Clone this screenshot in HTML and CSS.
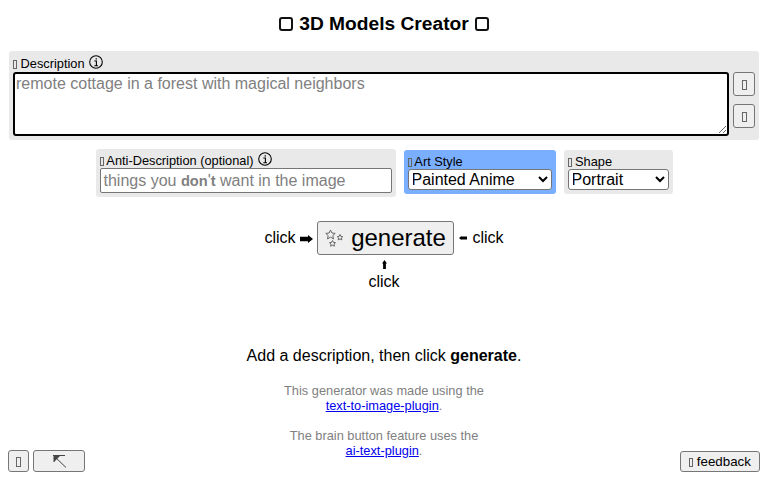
FILE: index.html
```html
<!DOCTYPE html>
<html lang="en">
<head>
<meta charset="utf-8">
<title>3D Models Creator</title>
<link rel="stylesheet" href="styles.css">
</head>
<body>
<h1 class="title"><span class="title-box title-box-l"></span> 3D Models Creator <span class="title-box title-box-r"></span></h1>
<section class="panel desc-panel">
  <div class="desc-main">
    <label class="label"><span class="tofu"></span> Description <svg class="info" width="14" height="14" viewBox="0 0 14 14" fill="none" stroke="#000"><circle cx="7" cy="7" r="6.3" stroke-width="1.1"/><path d="M5.3 6H7.4V10.5M5.3 10.7H9" stroke-width="1.1"/><path d="M6.6 3.2H7.9V4.5H6.6Z" fill="#000" stroke="none"/></svg></label>
    <textarea class="desc-input" placeholder="remote cottage in a forest with magical neighbors"></textarea>
  </div>
  <div class="desc-side">
    <button class="btn side-btn"><span class="tofu tofu-lg"></span></button>
    <button class="btn side-btn"><span class="tofu tofu-lg"></span></button>
  </div>
</section>
<section class="options">
  <div class="panel opt anti">
    <label class="label"><span class="tofu"></span> Anti-Description (optional) <svg class="info" width="14" height="14" viewBox="0 0 14 14" fill="none" stroke="#000"><circle cx="7" cy="7" r="6.3" stroke-width="1.1"/><path d="M5.3 6H7.4V10.5M5.3 10.7H9" stroke-width="1.1"/><path d="M6.6 3.2H7.9V4.5H6.6Z" fill="#000" stroke="none"/></svg></label>
    <div class="fake-input">things you <b>don</b>'<b>t</b> want in the image</div>
  </div>
  <div class="panel opt opt-sel art">
    <label class="label"><span class="tofu"></span> Art Style</label>
    <select class="sel sel-art"><option>Painted Anime</option></select>
  </div>
  <div class="panel opt opt-sel shape">
    <label class="label"><span class="tofu"></span> Shape</label>
    <select class="sel sel-shape"><option>Portrait</option></select>
  </div>
</section>
<section class="gen-row">
  <span class="click-side click-left">click
    <svg class="arrow-right" width="13" height="8" viewBox="0 0 13 8"><path d="M0 1.8H8V0L13 4 8 8V6.2H0Z" fill="#000"/></svg>
  </span>
  <button class="btn gen-btn">
    <svg class="stars" width="19" height="18" viewBox="0 0 19 18" fill="none" stroke="#666" stroke-width="1"><path d="M5.5 1 6.9 4 10.2 4.4 7.8 6.6 8.5 9.9 5.5 8.2 2.5 9.9 3.2 6.6 .8 4.4 4.1 4Z"/><path d="M15 5.5 15.8 7.3 17.8 7.6 16.4 8.9 16.8 10.9 15 9.9 13.2 10.9 13.6 8.9 12.2 7.6 14.2 7.3Z"/><path d="M7.5 11.5 8.4 13.4 10.5 13.7 9 15.1 9.4 17.2 7.5 16.2 5.6 17.2 6 15.1 4.5 13.7 6.6 13.4Z"/></svg>
    <span>generate</span>
  </button>
  <span class="click-side">
    <svg class="arrow-left" width="8" height="4" viewBox="0 0 8 4"><path d="M0 2 2.5 0V.6H8V3.4H2.5V4Z" fill="#000"/></svg>
    click
  </span>
</section>
<div class="up-click">
  <div class="up-arrow"><svg width="5" height="9" viewBox="0 0 5 9"><path d="M2.5 0 5 3.5H3.9V9H1.1V3.5H0Z" fill="#000"/></svg></div>
  <div>click</div>
</div>
<p class="hint">Add a description, then click <b>generate</b>.</p>
<p class="credit">This generator was made using the<br><a href="#">text-to-image-plugin</a>.</p>
<p class="credit credit-2">The brain button feature uses the<br><a href="#">ai-text-plugin</a>.</p>
<div class="corner-left">
  <button class="btn small-btn"><span class="tofu tofu-lg"></span></button>
  <button class="btn wide-btn">
    <svg width="14" height="14" viewBox="0 0 14 14" fill="none" stroke="#444" stroke-width="1"><path d="M0 1.5H12"/><path d="M1 2V8"/><path d="M2 3 13 13.5"/><path d="M1 2H7L1 8Z" fill="#444" stroke="none"/></svg>
  </button>
</div>
<button class="btn feedback"><span class="tofu"></span> feedback</button>
</body>
</html>
```
FILE: styles.css
```css
* { box-sizing: border-box; }
html, body { height: 100%; }
body {
  margin: 0;
  padding: 0 9px;
  font-family: "Liberation Sans", sans-serif;
  font-size: 16px;
  color: #000;
  background: #fff;
  overflow: hidden;
}
.title {
  margin: 0;
  padding-top: 13px;
  height: 51px;
  font-size: 19.2px;
  line-height: 22px;
  font-weight: 700;
  text-align: center;
}
.title-box {
  display: inline-block;
  width: 14px;
  height: 14px;
  border: 2px solid #111;
  border-radius: 3px;
  vertical-align: -1px;
}
.title-box-l { margin-right: 1px; }
.title-box-r { margin-left: 1px; }
.tofu {
  display: inline-block;
  width: 4px;
  height: 9px;
  border: 1px solid #666;
  vertical-align: -1px;
}
.tofu-lg { width: 5px; height: 10px; }
.panel {
  background: #e9e9e9;
  border-radius: 3px;
}
.label {
  display: block;
  font-size: 12.8px;
  line-height: 15px;
}
.info { vertical-align: -1px; margin-left: 1px; }
.desc-panel {
  display: flex;
  gap: 4px;
  height: 89px;
  padding: 4px;
}
.desc-main { flex: 1; min-width: 0; display: flex; flex-direction: column; }
.desc-main .label { height: 17px; }
.desc-input {
  display: block;
  width: 100%;
  height: 64px;
  padding: 1px;
  border: 2px solid #000;
  border-radius: 3px;
  font: 16px/18px "Liberation Sans", sans-serif;
  outline: none;
  background: #fff;
}
.desc-input::placeholder { color: #808080; }
.desc-side {
  display: flex;
  flex-direction: column;
  gap: 8px;
  padding-top: 17px;
}
.btn {
  background: #efefef;
  border: 1px solid #767676;
  border-radius: 3px;
  font-family: "Liberation Sans", sans-serif;
  color: #000;
  padding: 0;
}
.side-btn { width: 22px; height: 24px; }
.options {
  display: flex;
  justify-content: center;
  align-items: flex-start;
  gap: 8px;
  margin-top: 9px;
}
.opt { padding: 0 4px; height: 48px; }
.anti { width: 300px; }
.anti .label { height: 19px; padding-top: 3px; }
.opt-sel { height: 44px; margin-top: 1px; padding-top: 3px; }
.opt-sel .label { height: 15px; margin-top: 1px; }
.art { width: 152px; background: #7aaeff; }
.shape { width: 109px; }
.fake-input {
  height: 25px;
  border: 1px solid #767676;
  border-radius: 2px;
  background: #fff;
  color: #808080;
  font-size: 16px;
  line-height: 23px;
  padding-left: 3px;
  white-space: nowrap;
}
.fake-input b { font-size: 14.6px; }
.sel {
  display: block;
  width: 100%;
  height: 21px;
  font: 16px "Liberation Sans", sans-serif;
  text-indent: -1px;
  background: #fff;
  color: #000;
  border: 1px solid #767676;
  border-radius: 3px;
}
.gen-row {
  display: flex;
  justify-content: center;
  align-items: center;
  gap: 5px;
  margin-top: 24px;
  height: 34px;
}
.click-side { white-space: nowrap; }
.click-left { margin-right: -1px; }
.arrow-right { vertical-align: 0; }
.arrow-left { vertical-align: 3px; margin-right: 1px; }
.gen-btn {
  display: flex;
  align-items: center;
  justify-content: center;
  gap: 7px;
  width: 137px;
  height: 34px;
  font-size: 24px;
}
.stars { flex: none; }
.up-click { text-align: center; line-height: 18px; }
.up-arrow { height: 18px; line-height: 18px; padding-top: 1px; }
.up-arrow svg { display: block; margin: 4px auto 0; }
.hint { margin: 56px 0 0; text-align: center; line-height: 18px; }
.credit {
  margin: 18px 0 0;
  text-align: center;
  font-size: 12.8px;
  line-height: 15px;
  color: #808080;
}
.credit-2 { margin-top: 15px; }
.credit a { color: #0000ee; }
.corner-left {
  position: fixed;
  left: 8px;
  bottom: 8px;
  display: flex;
  gap: 4px;
}
.small-btn { width: 21px; height: 22px; }
.wide-btn { width: 52px; height: 22px; }
.wide-btn svg { display: block; margin: 0 auto 0 19px; }
.feedback {
  position: fixed;
  right: 8px;
  bottom: 8px;
  width: 80px;
  height: 21px;
  font-size: 13.33px;
}
```
